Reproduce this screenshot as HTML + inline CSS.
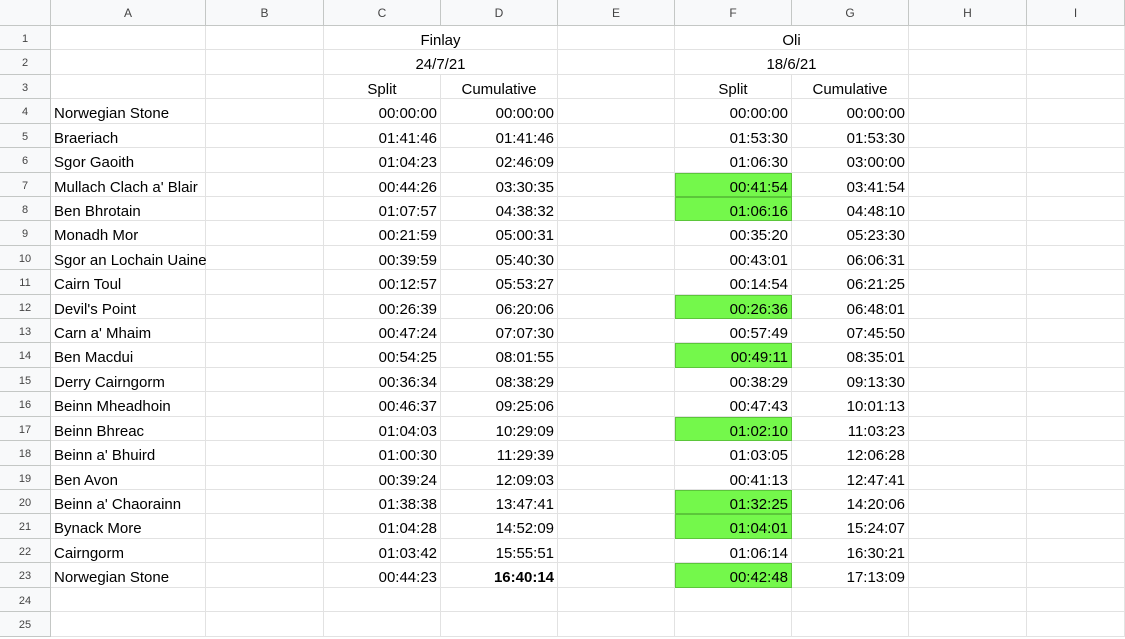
<!DOCTYPE html>
<html><head><meta charset="utf-8"><style>
body{margin:0;width:1125px;height:630px;overflow:hidden;background:#fff;font-family:"Liberation Sans",Arial,sans-serif}
.g{display:grid;grid-template-columns:51px 155px 118px 117px 117px 117px 117px 117px 118px 98px;grid-template-rows:26px repeat(25,24.43px)}
.g div{box-sizing:border-box;border-right:1px solid #e2e2e2;border-bottom:1px solid #e2e2e2;font-size:15px;color:#000;white-space:nowrap;overflow:visible;line-height:29px;padding:0 3px}
.g .h{background:#f8f9fa;border-color:#c4c7c5;color:#444;font-size:12px;text-align:center;line-height:26px}
.g .r{background:#f8f9fa;border-color:#c4c7c5;color:#444;font-size:11px;text-align:center;padding:0;line-height:27px}
.n{text-align:right}.c{text-align:center}
.g .gr{background:#74f84b;border:1px solid #5bc63a;line-height:27px}
.b{font-weight:bold}
</style></head><body><div class="g" id="g">
<div class="h"></div><div class="h">A</div><div class="h">B</div><div class="h">C</div><div class="h">D</div><div class="h">E</div><div class="h">F</div><div class="h">G</div><div class="h">H</div><div class="h">I</div>
<div class="r">1</div><div></div><div></div><div class="c" style="grid-column:span 2">Finlay</div><div></div><div class="c" style="grid-column:span 2">Oli</div><div></div><div></div>
<div class="r">2</div><div></div><div></div><div class="c" style="grid-column:span 2">24/7/21</div><div></div><div class="c" style="grid-column:span 2">18/6/21</div><div></div><div></div>
<div class="r">3</div><div></div><div></div><div class="c">Split</div><div class="c">Cumulative</div><div></div><div class="c">Split</div><div class="c">Cumulative</div><div></div><div></div>
</div>
<script>
var d=[["Norwegian Stone","00:00:00","00:00:00","00:00:00","00:00:00"],
["Braeriach","01:41:46","01:41:46","01:53:30","01:53:30"],
["Sgor Gaoith","01:04:23","02:46:09","01:06:30","03:00:00"],
["Mullach Clach a' Blair","00:44:26","03:30:35","*00:41:54","03:41:54"],
["Ben Bhrotain","01:07:57","04:38:32","*01:06:16","04:48:10"],
["Monadh Mor","00:21:59","05:00:31","00:35:20","05:23:30"],
["Sgor an Lochain Uaine","00:39:59","05:40:30","00:43:01","06:06:31"],
["Cairn Toul","00:12:57","05:53:27","00:14:54","06:21:25"],
["Devil's Point","00:26:39","06:20:06","*00:26:36","06:48:01"],
["Carn a' Mhaim","00:47:24","07:07:30","00:57:49","07:45:50"],
["Ben Macdui","00:54:25","08:01:55","*00:49:11","08:35:01"],
["Derry Cairngorm","00:36:34","08:38:29","00:38:29","09:13:30"],
["Beinn Mheadhoin","00:46:37","09:25:06","00:47:43","10:01:13"],
["Beinn Bhreac","01:04:03","10:29:09","*01:02:10","11:03:23"],
["Beinn a' Bhuird","01:00:30","11:29:39","01:03:05","12:06:28"],
["Ben Avon","00:39:24","12:09:03","00:41:13","12:47:41"],
["Beinn a' Chaorainn","01:38:38","13:47:41","*01:32:25","14:20:06"],
["Bynack More","01:04:28","14:52:09","*01:04:01","15:24:07"],
["Cairngorm","01:03:42","15:55:51","01:06:14","16:30:21"],
["Norwegian Stone","00:44:23","!16:40:14","*00:42:48","17:13:09"],
["","","","",""],["","","","",""]];
var h="";
d.forEach(function(r,i){
 function n(v){var c="n";if(v[0]=="*"){c+=" gr";v=v.slice(1)}if(v[0]=="!"){c+=" b";v=v.slice(1)}return '<div class="'+c+'">'+v+'</div>'}
 h+='<div class="r">'+(i+4)+'</div><div>'+r[0]+'</div><div></div>'+n(r[1])+n(r[2])+'<div></div>'+n(r[3])+n(r[4])+'<div></div><div></div>';
});
document.getElementById('g').insertAdjacentHTML('beforeend',h);
</script>
</body></html>
